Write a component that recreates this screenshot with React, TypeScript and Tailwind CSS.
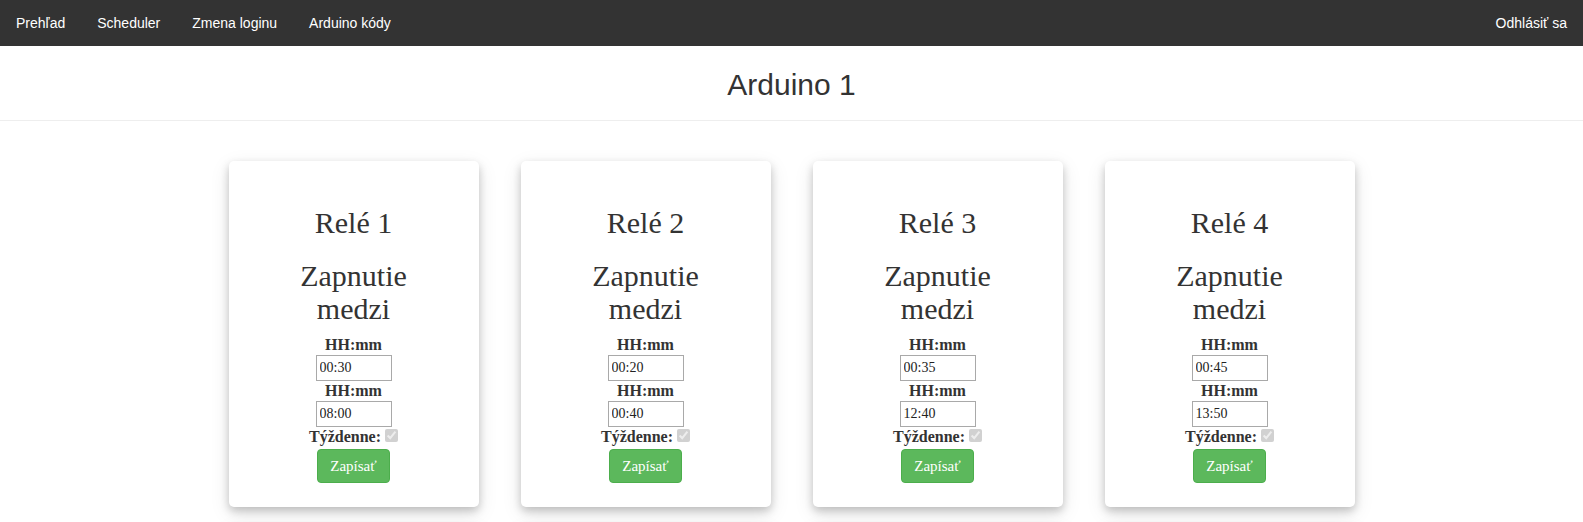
import React from 'react';

interface IRelayProps {
  id: number;
  from: string;
  to: string;
}

const navLinks = ['Prehľad', 'Scheduler', 'Zmena loginu', 'Arduino kódy'];

const relays: IRelayProps[] = [
  { id: 1, from: '00:30', to: '08:00' },
  { id: 2, from: '00:20', to: '00:40' },
  { id: 3, from: '00:35', to: '12:40' },
  { id: 4, from: '00:45', to: '13:50' },
];

const cardShadow =
  'bg-white rounded-[5px] shadow-[0_4px_8px_0_rgba(0,0,0,0.2),0_6px_20px_0_rgba(0,0,0,0.1)]';

const RelayCard: React.FC<IRelayProps> = (props) => {
  return (
    <div
      className={`w-[250px] ${cardShadow} pt-[45px] pb-[24px] text-center text-[#333] font-['Liberation_Serif',serif]`}
    >
      <h2 className="text-[30px] leading-[33px]">Relé {props.id}</h2>
      <h2 className="mt-[20px] text-[30px] leading-[33px]">
        Zapnutie
        <br />
        medzi
      </h2>
      <form className="mt-[10px] flex flex-col items-center">
        <label className="block text-[16px] leading-[20px] font-bold">HH:mm</label>
        <input
          type="text"
          defaultValue={props.from}
          className="w-[76px] h-[26px] border border-[#a9a9a9] px-[3px] text-[14px] text-[#222]"
        />
        <label className="block text-[16px] leading-[20px] font-bold">HH:mm</label>
        <input
          type="text"
          defaultValue={props.to}
          className="w-[76px] h-[26px] border border-[#a9a9a9] px-[3px] text-[14px] text-[#222]"
        />
        <div className="flex items-center h-[20px] text-[16px] leading-[20px] font-bold">
          <span>Týždenne:</span>
          <input type="checkbox" defaultChecked disabled className="ml-[4px] w-[13px] h-[13px] mb-[3px]" />
        </div>
        <button
          type="button"
          className="mt-[2px] bg-[#5cb85c] border border-[#4cae4c] rounded-[4px] px-[12px] py-[6px] text-[15px] leading-[20px] text-white"
        >
          Zapísať
        </button>
      </form>
    </div>
  );
};

export default function App() {
  return (
    <div className="h-screen overflow-hidden bg-white">
      <nav className="h-[46px] bg-[#333] flex items-center justify-between font-['Liberation_Sans',Arial,sans-serif] text-[14px] text-white">
        <div className="flex">
          {navLinks.map((link) => (
            <a key={link} className="px-4">
              {link}
            </a>
          ))}
        </div>
        <a className="px-4">Odhlásiť sa</a>
      </nav>
      <div className="pt-[22px] pb-[19px] border-b border-[#eee] text-center">
        <h1 className="text-[30px] leading-[33px] text-[#333] font-['Liberation_Sans',Arial,sans-serif]">
          Arduino 1
        </h1>
      </div>
      <div className="pt-[40px] flex flex-col items-center gap-[18px]">
        <div className="flex justify-center gap-[42px]">
          {relays.map((r) => (
            <RelayCard key={r.id} {...r} />
          ))}
        </div>
        {/* next row of cards, only its top edge is in view */}
        <div className="flex justify-center gap-[42px]">
          {[5, 6, 7, 8].map((n) => (
            <div key={n} className={`w-[250px] h-[346px] ${cardShadow}`} />
          ))}
        </div>
      </div>
    </div>
  );
}
